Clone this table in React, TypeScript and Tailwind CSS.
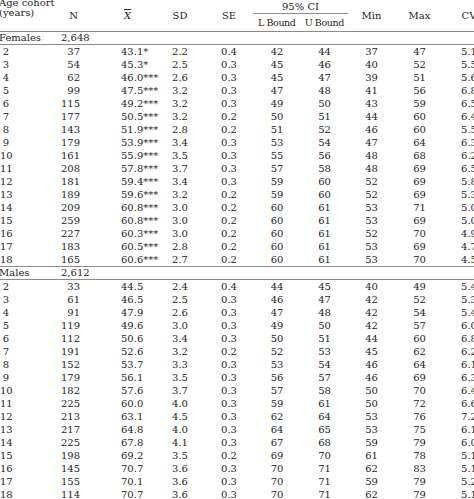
const females: [string, string, string, string, string, string, string, string, string, string][] = [
  ["2", "37", "43.1*", "2.2", "0.4", "42", "44", "37", "47", "5.1"],
  ["3", "54", "45.3*", "2.5", "0.3", "45", "46", "40", "52", "5.5"],
  ["4", "62", "46.0***", "2.6", "0.3", "45", "47", "39", "51", "5.6"],
  ["5", "99", "47.5***", "3.2", "0.3", "47", "48", "41", "56", "6.8"],
  ["6", "115", "49.2***", "3.2", "0.3", "49", "50", "43", "59", "6.5"],
  ["7", "177", "50.5***", "3.2", "0.2", "50", "51", "44", "60", "6.4"],
  ["8", "143", "51.9***", "2.8", "0.2", "51", "52", "46", "60", "5.5"],
  ["9", "179", "53.9***", "3.4", "0.3", "53", "54", "47", "64", "6.3"],
  ["10", "161", "55.9***", "3.5", "0.3", "55", "56", "48", "68", "6.2"],
  ["11", "208", "57.8***", "3.7", "0.3", "57", "58", "48", "69", "6.5"],
  ["12", "181", "59.4***", "3.4", "0.3", "59", "60", "52", "69", "5.8"],
  ["13", "189", "59.6***", "3.2", "0.2", "59", "60", "52", "69", "5.3"],
  ["14", "209", "60.8***", "3.0", "0.2", "60", "61", "53", "71", "5.0"],
  ["15", "259", "60.8***", "3.0", "0.2", "60", "61", "53", "69", "5.0"],
  ["16", "227", "60.3***", "3.0", "0.2", "60", "61", "52", "70", "4.9"],
  ["17", "183", "60.5***", "2.8", "0.2", "60", "61", "53", "69", "4.7"],
  ["18", "165", "60.6***", "2.7", "0.2", "60", "61", "53", "70", "4.5"],
];

const males: typeof females = [
  ["2", "33", "44.5", "2.4", "0.4", "44", "45", "40", "49", "5.4"],
  ["3", "61", "46.5", "2.5", "0.3", "46", "47", "42", "52", "5.3"],
  ["4", "91", "47.9", "2.6", "0.3", "47", "48", "42", "54", "5.4"],
  ["5", "119", "49.6", "3.0", "0.3", "49", "50", "42", "57", "6.0"],
  ["6", "112", "50.6", "3.4", "0.3", "50", "51", "44", "60", "6.8"],
  ["7", "191", "52.6", "3.2", "0.2", "52", "53", "45", "62", "6.2"],
  ["8", "152", "53.7", "3.3", "0.3", "53", "54", "46", "64", "6.1"],
  ["9", "179", "56.1", "3.5", "0.3", "56", "57", "46", "69", "6.3"],
  ["10", "182", "57.6", "3.7", "0.3", "57", "58", "50", "70", "6.4"],
  ["11", "225", "60.0", "4.0", "0.3", "59", "61", "50", "72", "6.6"],
  ["12", "213", "63.1", "4.5", "0.3", "62", "64", "53", "76", "7.2"],
  ["13", "217", "64.8", "4.0", "0.3", "64", "65", "53", "75", "6.1"],
  ["14", "225", "67.8", "4.1", "0.3", "67", "68", "59", "79", "6.0"],
  ["15", "198", "69.2", "3.5", "0.2", "69", "70", "61", "78", "5.1"],
  ["16", "145", "70.7", "3.6", "0.3", "70", "71", "62", "83", "5.1"],
  ["17", "155", "70.1", "3.6", "0.3", "70", "71", "59", "79", "5.2"],
  ["18", "114", "70.7", "3.6", "0.3", "70", "71", "62", "79", "5.1"],
];

const cols = "grid grid-cols-[20px_80px_55px_50px_48px_48px_47px_47px_49px_50px]";

function DataRow({ r }: { r: string[] }) {
  return (
    <div className={`${cols} h-[13px] items-center leading-none`}>
      <div className="text-right pr-[11px]">{r[0]}</div>
      <div className="text-right pr-[20px]">{r[1]}</div>
      <div className="pl-[21px] whitespace-nowrap">{r[2]}</div>
      <div className="text-center">{r[3]}</div>
      <div className="text-center">{r[4]}</div>
      <div className="text-center">{r[5]}</div>
      <div className="text-center">{r[6]}</div>
      <div className="text-center">{r[7]}</div>
      <div className="text-center">{r[8]}</div>
      <div className="text-center">{r[9]}</div>
    </div>
  );
}

function GroupRow({ label, n }: { label: string; n: string }) {
  return (
    <div className="flex h-[12px] items-center leading-none">
      <div className="w-[62px] -ml-[1px]">{label}</div>
      <div>{n}</div>
    </div>
  );
}

const Rule = () => <div className="h-px w-full bg-[#8c8c8c]" />;

export default function App() {
  return (
    <div className="w-[474px] h-[499px] overflow-hidden bg-white text-[#262626] text-[10px]" style={{ fontFamily: '"DejaVu Serif", serif' }}>
      <div className="w-[494px]">
        {/* header */}
        <div className={`${cols} h-[31px] items-center leading-none`}>
          <div className="self-start -ml-[1px] whitespace-nowrap leading-[10px]">
            <div className="-mt-[2px]">Age cohort</div>
            <div>(years)</div>
          </div>
          <div className="text-right pr-[22px]">N</div>
          <div className="pl-[24px]">
            <span className="italic overline">X</span>
          </div>
          <div className="text-center">SD</div>
          <div className="text-center">SE</div>
          <div className="col-span-2 flex flex-col items-center self-stretch">
            <div className="h-[13px] flex items-center">95% CI</div>
            <div className="h-px bg-[#8c8c8c] w-[95px] -ml-[1px]" />
            <div className="flex w-full flex-1 items-center tracking-[-0.4px] text-[9.5px]">
              <div className="w-1/2 text-center">L Bound</div>
              <div className="w-1/2 text-center">U Bound</div>
            </div>
          </div>
          <div className="text-center">Min</div>
          <div className="text-center">Max</div>
          <div className="text-center">CV</div>
        </div>
        <Rule />
        <GroupRow label="Females" n="2,648" />
        <Rule />
        {females.map((r) => (
          <DataRow key={"f" + r[0]} r={r} />
        ))}
        <Rule />
        <GroupRow label="Males" n="2,612" />
        <Rule />
        {males.map((r) => (
          <DataRow key={"m" + r[0]} r={r} />
        ))}
      </div>
    </div>
  );
}
